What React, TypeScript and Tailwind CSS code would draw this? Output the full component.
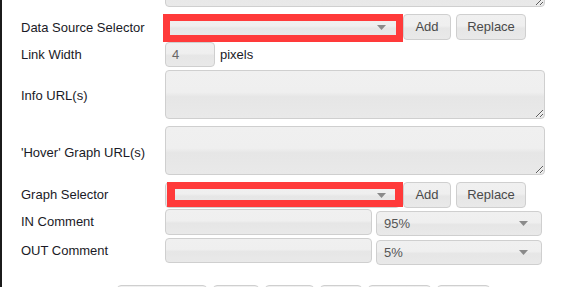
import type { ReactNode } from "react";

const field =
  "border border-[#cfcfcf] rounded-[4px] bg-[linear-gradient(to_bottom,#f0f0f0_0%,#efefef_45%,#e6e6e6_55%,#e9e9e9_100%)]";

function Label({ children, className = "" }: { children?: ReactNode; className?: string }) {
  return <div className={`w-[144px] shrink-0 text-[13px] text-[#1a1a26] ${className}`}>{children}</div>;
}

function Arrow() {
  return (
    <svg width="9" height="5" viewBox="0 0 9 5" className="shrink-0">
      <path d="M0 0 L9 0 L4.5 5 Z" fill="#8a8a8a" />
    </svg>
  );
}

function Button({ children, className = "" }: { children?: ReactNode; className?: string }) {
  return (
    <div
      className={`${field} flex items-center justify-center text-[13px] text-[#4a4a4a] rounded-[3px] ${className}`}
    >
      {children}
    </div>
  );
}

function Textarea() {
  return (
    <textarea
      className={`${field} w-[380px] h-[49px] resize-y outline-none block`}
      defaultValue=""
    />
  );
}

export default function App() {
  return (
    <div className="w-[572px] h-[287px] overflow-hidden bg-white border-l-2 border-[#1b1b1b] font-['Liberation_Sans',Arial,sans-serif]">
      <div className="pl-[19px]">
        {/* previous textarea, cut off */}
        <div className="flex mt-[-42px]">
          <Label />
          <Textarea />
        </div>

        {/* Data Source Selector */}
        <div className="flex items-center mt-[7px] h-[28px]">
          <Label>Data Source Selector</Label>
          <div className="relative w-[238px] h-[28px]">
            <div className={`${field} w-[235px] h-[26px] flex items-center justify-end pr-[13px]`}>
              <Arrow />
            </div>
            <div className="absolute left-[-2px] top-0 w-[240px] h-[28px] border-[7px] border-[#ff3a3a]" />
          </div>
          <Button className="w-[48px] h-[26px] self-start">Add</Button>
          <Button className="w-[70px] h-[26px] ml-[5px] self-start">Replace</Button>
        </div>

        {/* Link Width */}
        <div className="flex items-center h-[25px]">
          <Label>Link Width</Label>
          <div className={`${field} w-[50px] h-[25px] flex items-center pl-[6px] text-[13px] text-[#666]`}>4</div>
          <span className="ml-[5px] text-[13px] text-[#1a1a26]">pixels</span>
        </div>

        {/* Info URL(s) */}
        <div className="flex items-center mt-[3px]">
          <Label className="pt-[3px]">Info URL(s)</Label>
          <Textarea />
        </div>

        {/* Hover Graph URL(s) */}
        <div className="flex items-center mt-[7px]">
          <Label className="pt-[4px]">'Hover' Graph URL(s)</Label>
          <Textarea />
        </div>

        {/* Graph Selector */}
        <div className="flex items-center mt-[7px] h-[26px]">
          <Label>Graph Selector</Label>
          <div className="relative w-[238px] h-[26px]">
            <div className={`${field} w-[235px] h-[26px] flex items-center justify-end pr-[13px]`}>
              <Arrow />
            </div>
            <div className="absolute left-[2px] top-0 w-[236px] h-[25px] border-[7px] border-x-[8px] border-[#ff3a3a]" />
          </div>
          <Button className="w-[48px] h-[26px]">Add</Button>
          <Button className="w-[70px] h-[26px] ml-[5px]">Replace</Button>
        </div>

        {/* IN Comment */}
        <div className="flex items-start mt-[1px]">
          <Label className="h-[26px] flex items-center">IN Comment</Label>
          <div className={`${field} w-[207px] h-[26px]`} />
          <div
            className={`${field} w-[166px] h-[25px] ml-[4px] mt-[2px] flex items-center justify-between pl-[7px] pr-[13px] text-[13px] text-[#555]`}
          >
            95%
            <Arrow />
          </div>
        </div>

        {/* OUT Comment */}
        <div className="flex items-start mt-[2px]">
          <Label className="h-[26px] flex items-center">OUT Comment</Label>
          <div className={`${field} w-[207px] h-[25px]`} />
          <div
            className={`${field} w-[166px] h-[25px] ml-[4px] mt-[2px] flex items-center justify-between pl-[7px] pr-[13px] text-[13px] text-[#555]`}
          >
            5%
            <Arrow />
          </div>
        </div>

        {/* bottom buttons, cut off at the window edge */}
        <div className="flex gap-[6px] ml-[96px] mt-[20px]">
          <Button className="w-[90px] h-[26px]" />
          <Button className="w-[46px] h-[26px]" />
          <Button className="w-[49px] h-[26px]" />
          <Button className="w-[42px] h-[26px]" />
          <Button className="w-[63px] h-[26px]" />
          <Button className="w-[53px] h-[26px]" />
        </div>
      </div>
    </div>
  );
}
